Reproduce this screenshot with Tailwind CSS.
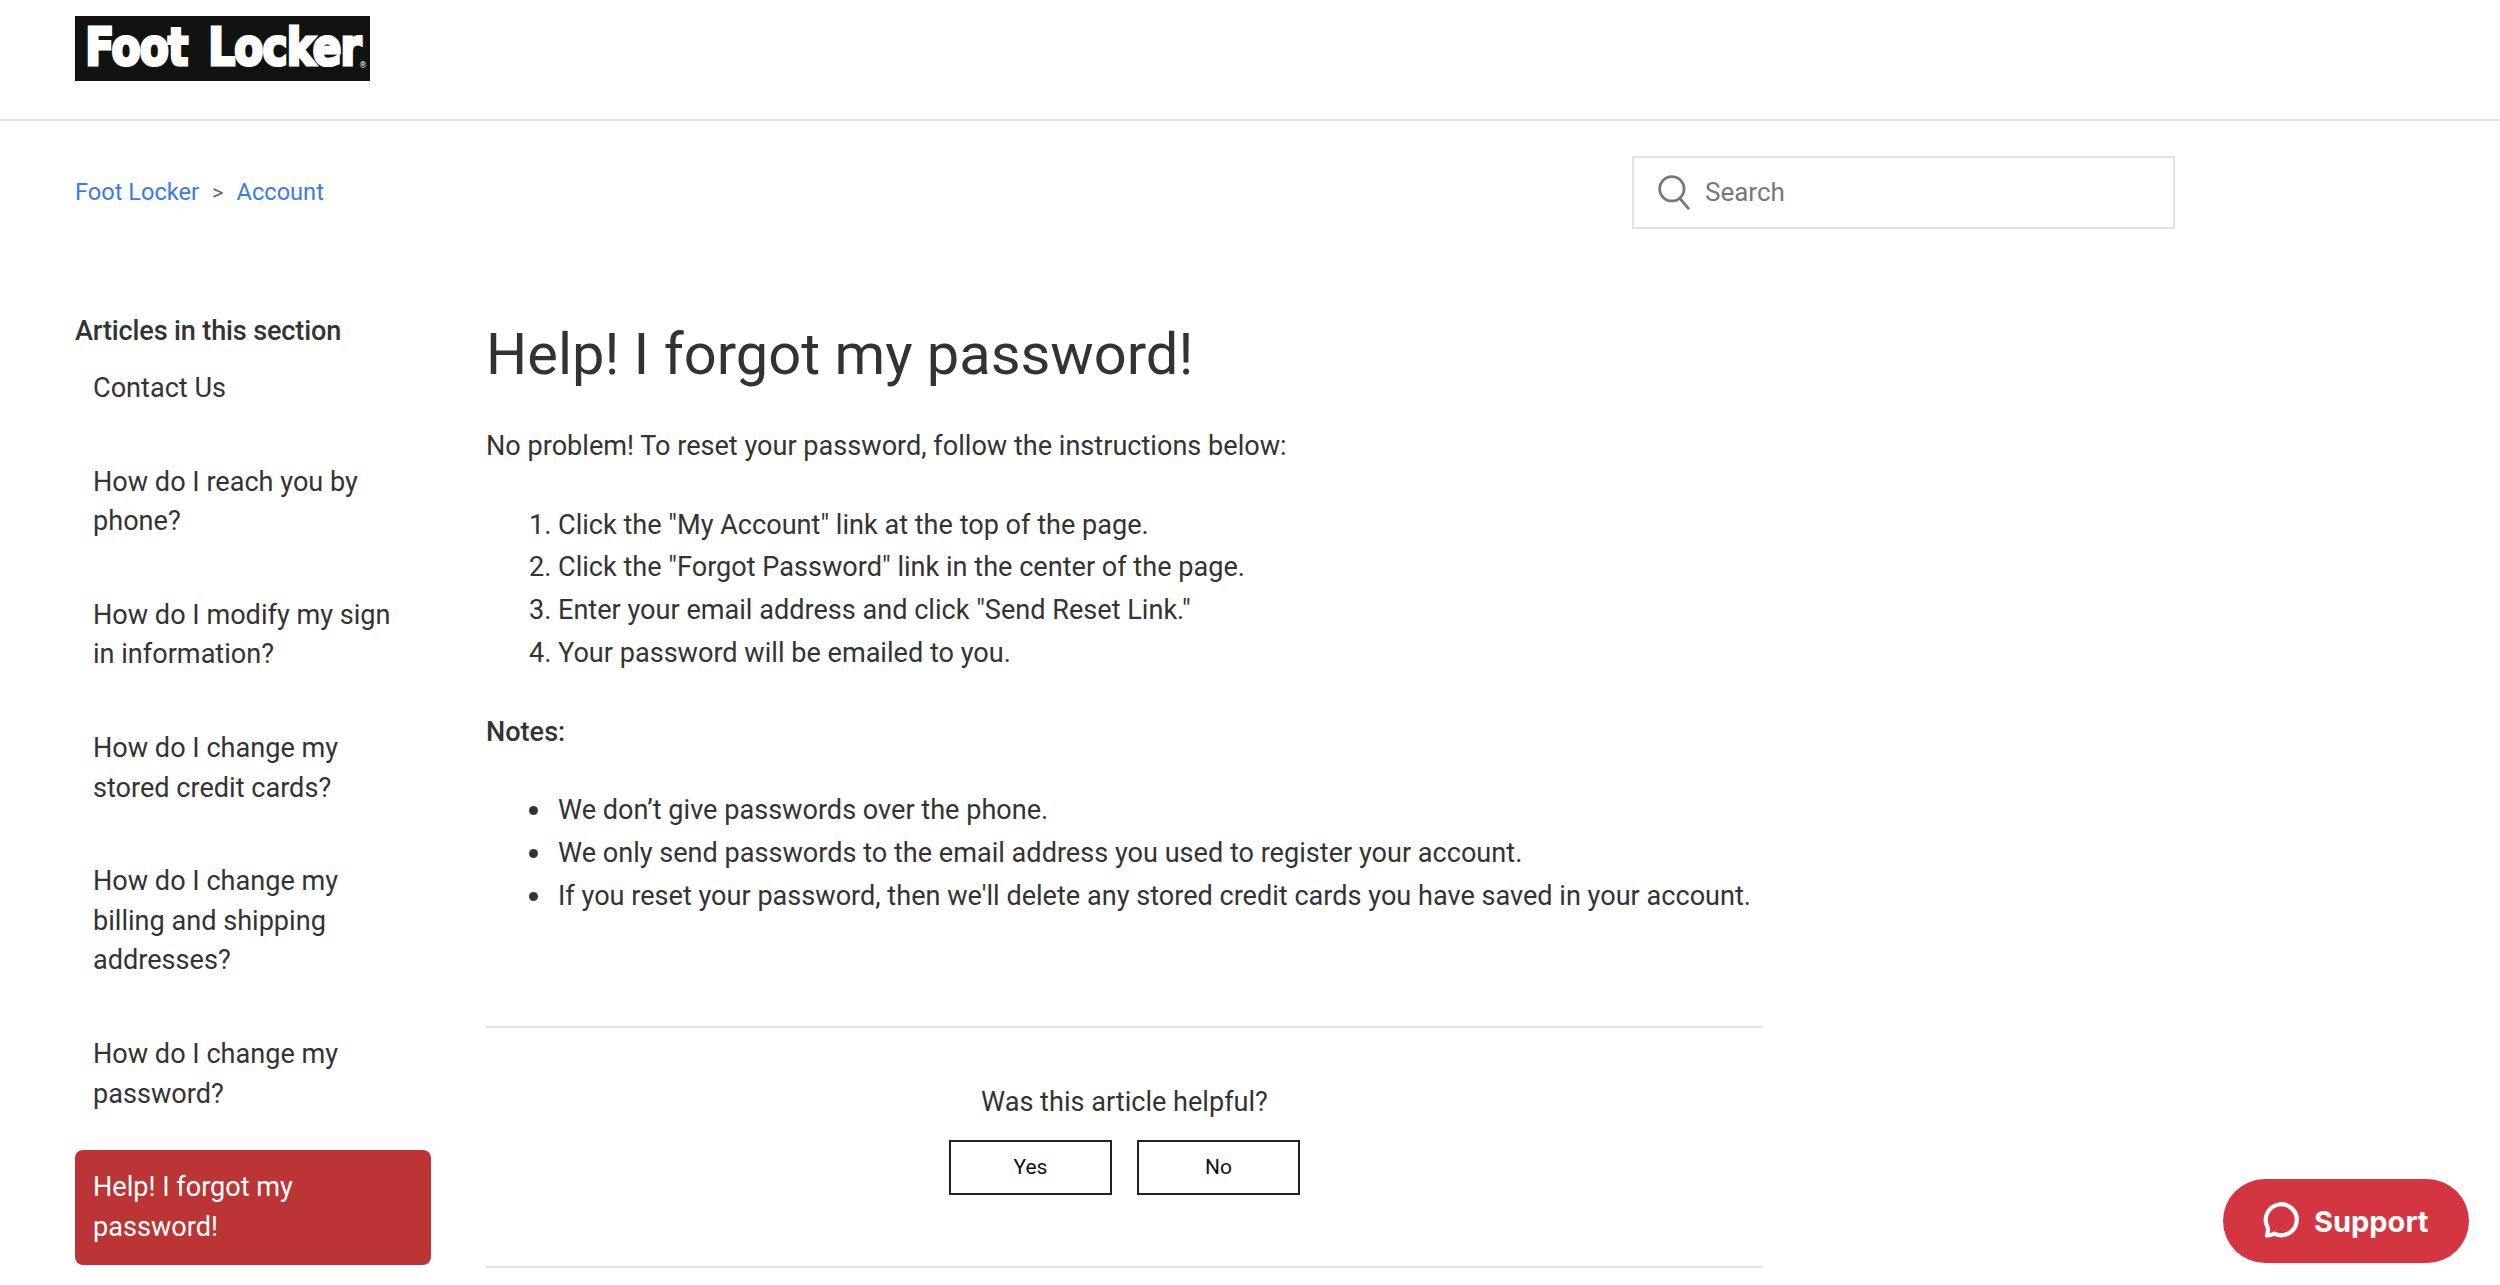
<!DOCTYPE html>
<html lang="en">
<head>
    <meta charset="UTF-8">
    <title>Help! I forgot my password!</title>
    <script src="https://cdn.jsdelivr.net/npm/@tailwindcss/browser@4"></script>
</head>
<body class="bg-white h-[1285px] overflow-hidden relative font-['Roboto',sans-serif] text-[#333333]">
    <!-- Header -->
    <header class="h-[121px] border-b-2 border-[#e3e3e3] pl-[75px] pt-[16px]">
        <a href="#" class="relative flex items-center justify-center w-[295px] h-[65px] bg-[#111311] text-white font-['DejaVu_Sans',sans-serif] font-bold text-[47px] tracking-[-1px] [word-spacing:8px] [-webkit-text-stroke:3px_white]">
            <span class="whitespace-nowrap leading-[28px] scale-x-[0.9] scale-y-[1.08] -mt-[2px]">Foot Locker</span>
            <span class="absolute right-[3px] top-[46px] text-[8px] leading-none tracking-normal font-normal [-webkit-text-stroke:0]">®</span>
        </a>
    </header>

    <!-- Breadcrumbs and search -->
    <div class="flex items-center justify-between w-[2175px] pl-[75px] mt-[35px]">
        <nav class="flex items-center text-[23.6px] text-[#3b7ae8]">
            <a href="#">Foot Locker</a>
            <span class="text-[#666666] text-[22px] mx-[13px]">&gt;</span>
            <a href="#">Account</a>
        </nav>
        <div class="flex items-center w-[543px] h-[73px] border-2 border-[#e3e3e3] pl-[24px]">
            <svg class="w-[32px] h-[35px] text-[#777777]" viewBox="0 0 30 33" fill="none" stroke="currentColor" stroke-width="2.6" stroke-linecap="round">
                <circle cx="13" cy="13" r="11.5"/>
                <path d="M20.5 22l8 9.5"/>
            </svg>
            <span class="ml-[15px] text-[26px] text-[#777777]">Search</span>
        </div>
    </div>

    <div class="flex pl-[75px] mt-[87px]">
        <!-- Sidebar -->
        <aside class="w-[356px] shrink-0 text-[27.1px] leading-[39.6px]">
            <h3 class="font-medium tracking-[-0.15px] mb-[23px] leading-[30px]">Articles in this section</h3>
            <ul class="flex flex-col gap-[54px]">
                <li class="pl-[18px] pr-[30px]">Contact Us</li>
                <li class="pl-[18px] pr-[30px]">How do I reach you by phone?</li>
                <li class="pl-[18px] pr-[30px]">How do I modify my sign in information?</li>
                <li class="pl-[18px] pr-[30px]">How do I change my stored credit cards?</li>
                <li class="pl-[18px] pr-[30px]">How do I change my billing and shipping addresses?</li>
                <li class="pl-[18px] pr-[30px]">How do I change my password?</li>
                <li class="pl-[18px] pr-[30px] py-[18px] -mt-[18px] rounded-[8px] bg-[#ba3533] text-white">Help! I forgot my password!</li>
            </ul>
        </aside>

        <!-- Article -->
        <main class="w-[1277px] ml-[55px]">
            <h1 class="text-[57.8px] leading-[72px] mt-[2px]">Help! I forgot my password!</h1>
            <div class="text-[27.1px] leading-[42.7px] mt-[35px]">
                <p>No problem! To reset your password, follow the instructions below:</p>
                <ol class="list-decimal pl-[72px] mt-[36px]">
                    <li>Click the "My Account" link at the top of the page.</li>
                    <li>Click the "Forgot Password" link in the center of the page.</li>
                    <li>Enter your email address and click "Send Reset Link."</li>
                    <li>Your password will be emailed to you.</li>
                </ol>
                <p class="font-medium mt-[36px]">Notes:</p>
                <ul class="pl-[72px] mt-[36px]">
                    <li class="relative before:absolute before:left-[-29px] before:top-[17px] before:size-[9px] before:rounded-full before:bg-[#333333] before:content-['']">We don’t give passwords over the phone.</li>
                    <li class="relative before:absolute before:left-[-29px] before:top-[17px] before:size-[9px] before:rounded-full before:bg-[#333333] before:content-['']">We only send passwords to the email address you used to register your account.</li>
                    <li class="relative before:absolute before:left-[-29px] before:top-[17px] before:size-[9px] before:rounded-full before:bg-[#333333] before:content-['']">If you reset your password, then we'll delete any stored credit cards you have saved in your account.</li>
                </ul>
            </div>
            <div class="border-t-2 border-[#e3e3e3] mt-[109px] h-[240px] flex flex-col items-center pt-[54px]">
                <p class="text-[27.1px] leading-[40px] mb-[18px]">Was this article helpful?</p>
                <div class="flex gap-[25px]">
                    <button class="w-[163px] h-[55px] border-2 border-[#222222] text-[21px] text-[#111111]">Yes</button>
                    <button class="w-[163px] h-[55px] border-2 border-[#222222] text-[21px] text-[#111111]">No</button>
                </div>
            </div>
            <div class="border-t-2 border-[#e3e3e3]"></div>
        </main>
    </div>

    <!-- Support launcher -->
    <button class="absolute left-[2223px] top-[1179px] w-[246px] h-[84px] rounded-full bg-[#d33641] text-white flex items-center pl-[40px] font-['Inter',sans-serif] font-bold text-[29px]">
        <svg class="w-[36px] h-[38px] mr-[15px]" viewBox="0 0 36 38" fill="none" stroke="currentColor" stroke-width="4.2" stroke-linecap="round" stroke-linejoin="round">
            <path d="M4 33.5c2.5 0 5-.6 7.5-1.8a15.5 15.5 0 1 0-7-6.8c.7 2 .6 5-.5 8.6z"/>
        </svg>
        <span class="pt-[2px]">Support</span>
    </button>
</body>
</html>
